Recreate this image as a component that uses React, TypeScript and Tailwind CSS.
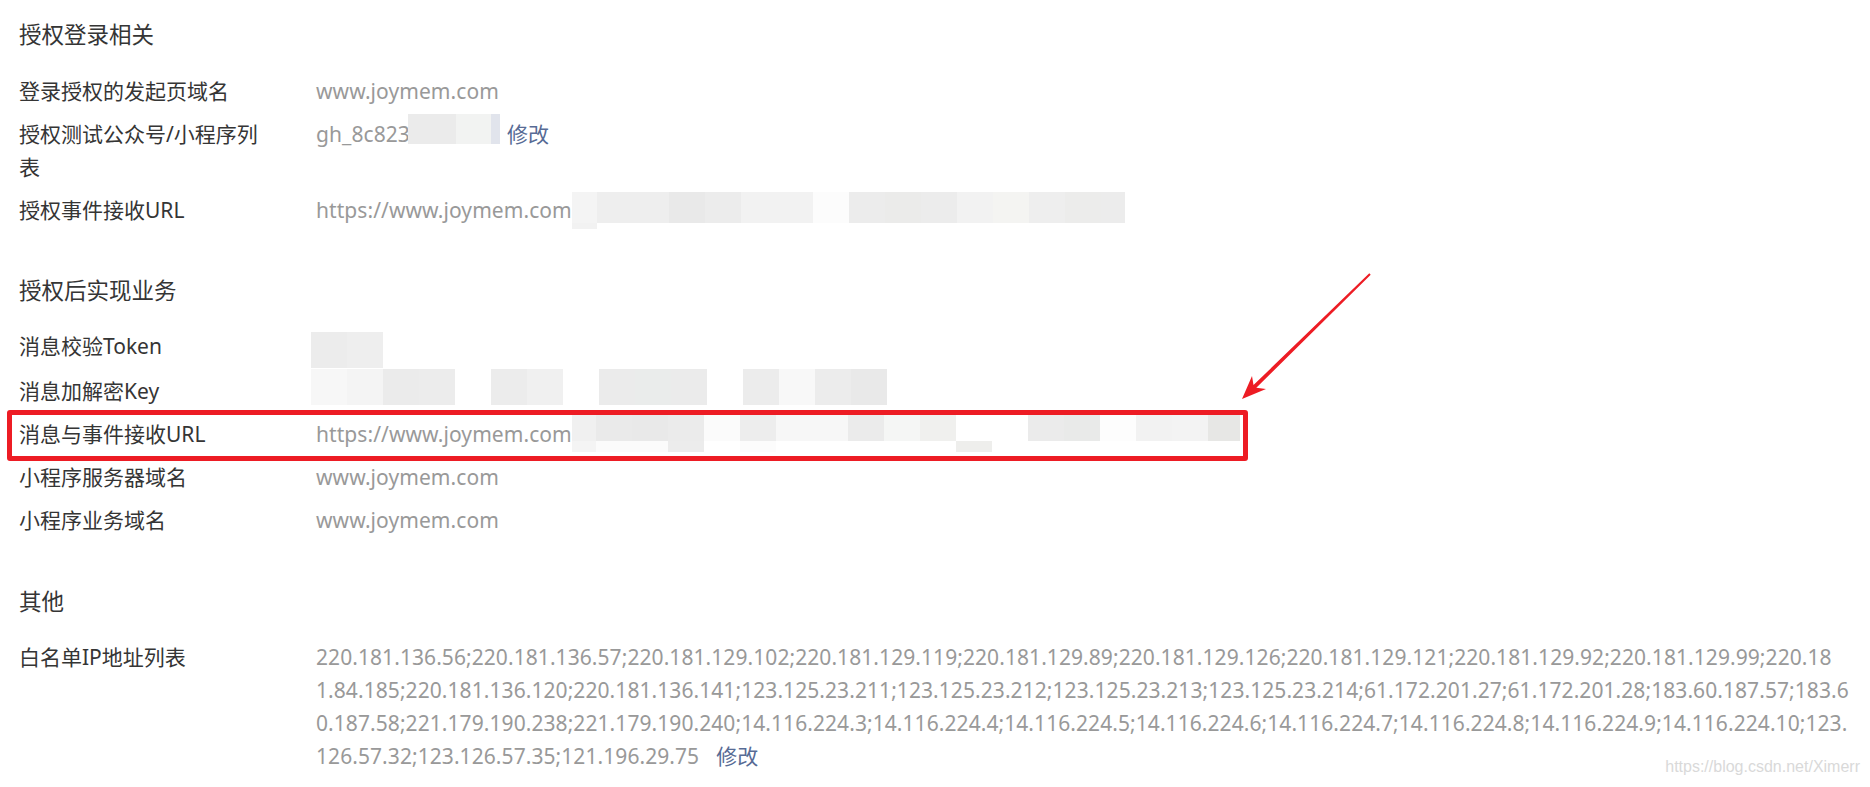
import type { ReactNode } from "react";
import clsx from "clsx";

const FONT = "font-['Noto_Sans','Noto_Sans_CJK_SC',sans-serif]";

// redaction blocks, one class string per cell
const GH_CELLS = ["w-[48px] bg-[#ebebeb]", "w-[35px] bg-[#f2f3f2]", "w-[9px] bg-[#e1e4ec]"];

const AUTH_URL_TOP = [
  "w-[25px] bg-[#f4f4f4]",
  "w-[36px] bg-[#eeeeee]",
  "w-[36px] bg-[#eeeeee]",
  "w-[36px] bg-[#e9e9e9]",
  "w-[36px] bg-[#ececec]",
  "w-[36px] bg-[#f2f2f2]",
  "w-[36px] bg-[#f2f2f2]",
  "w-[36px] bg-[#fcfcfc]",
  "w-[36px] bg-[#ececec]",
  "w-[36px] bg-[#ebebea]",
  "w-[36px] bg-[#ececec]",
  "w-[36px] bg-[#f2f2f2]",
  "w-[36px] bg-[#f4f4f2]",
  "w-[36px] bg-[#eeeeee]",
  "w-[36px] bg-[#ececeb]",
  "w-[24px] bg-[#ececec]",
];
const AUTH_URL_BOTTOM = ["w-[25px] bg-[#f2f2f2]"];

const TOKEN_CELLS = ["w-[36px] bg-[#ececec]", "w-[36px] bg-[#eeeeee]"];

const KEY_CELLS = [
  "w-[36px] bg-[#f7f7f7]",
  "w-[36px] bg-[#f4f4f4]",
  "w-[36px] bg-[#ebebeb]",
  "w-[36px] bg-[#ececec]",
  "w-[36px] bg-white",
  "w-[36px] bg-[#ececec]",
  "w-[36px] bg-[#f0f0f0]",
  "w-[36px] bg-white",
  "w-[36px] bg-[#ebebeb]",
  "w-[36px] bg-[#eaeceb]",
  "w-[36px] bg-[#ebebeb]",
  "w-[36px] bg-white",
  "w-[36px] bg-[#ececec]",
  "w-[36px] bg-[#f8f8f8]",
  "w-[36px] bg-[#ececec]",
  "w-[36px] bg-[#e9e9e9]",
];

const MSG_URL_TOP = [
  "w-[24px] bg-[#f0f0f0]",
  "w-[36px] bg-[#eaeaea]",
  "w-[36px] bg-[#e9e9e9]",
  "w-[36px] bg-[#ebebeb]",
  "w-[36px] bg-[#fbfbfb]",
  "w-[36px] bg-[#ededed]",
  "w-[36px] bg-[#f7f7f7]",
  "w-[36px] bg-[#f7f7f7]",
  "w-[36px] bg-[#ebebeb]",
  "w-[36px] bg-[#f5f6f5]",
  "w-[36px] bg-[#f0f0ee]",
  "w-[36px] bg-white",
  "w-[36px] bg-white",
  "w-[36px] bg-[#ebebeb]",
  "w-[36px] bg-[#e9eae9]",
  "w-[36px] bg-[#fdfdfd]",
  "w-[36px] bg-[#f2f2f2]",
  "w-[36px] bg-[#f3f3f3]",
  "w-[32px] bg-[#e7e7e5]",
];
const MSG_URL_BOTTOM = [
  "w-[24px] bg-[#f4f4f4]",
  "w-[36px] bg-[#fbfbfb]",
  "w-[36px] bg-[#fbfbfb]",
  "w-[36px] bg-[#ececec]",
  "w-[36px] bg-white",
  "w-[36px] bg-[#fcfcfc]",
  "w-[180px] bg-white",
  "w-[36px] bg-[#eeeeec]",
];

const WHITELIST = [
  "220.181.136.56;220.181.136.57;220.181.129.102;220.181.129.119;220.181.129.89;220.181.129.126;220.181.129.121;220.181.129.92;220.181.129.99;220.18",
  "1.84.185;220.181.136.120;220.181.136.141;123.125.23.211;123.125.23.212;123.125.23.213;123.125.23.214;61.172.201.27;61.172.201.28;183.60.187.57;183.6",
  "0.187.58;221.179.190.238;221.179.190.240;14.116.224.3;14.116.224.4;14.116.224.5;14.116.224.6;14.116.224.7;14.116.224.8;14.116.224.9;14.116.224.10;123.",
  "126.57.32;123.126.57.35;121.196.29.75",
];

function Blocks({ cells, className }: { cells: string[]; className: string }) {
  return (
    <div className={clsx("flex", className)}>
      {cells.map((c, i) => (
        <div key={i} className={clsx("shrink-0", c)} />
      ))}
    </div>
  );
}

function Heading({ children }: { children: ReactNode }) {
  return (
    <h2 className="mb-[23.5px] text-[22.5px] font-normal leading-[33px] text-[#353535]">
      {children}
    </h2>
  );
}

function Row({ label, children }: { label: string; children?: ReactNode }) {
  return (
    <div className="relative flex">
      <div className="w-[297px] shrink-0 pr-[50px] text-[#353535]">{label}</div>
      <div className="min-w-0 flex-1 tracking-[0.07px] text-[#999999]">{children}</div>
    </div>
  );
}

function EditLink({ className }: { className?: string }) {
  return <span className={clsx("cursor-pointer text-[#576b95]", className)}>修改</span>;
}

function RedArrow() {
  return (
    <svg
      className="pointer-events-none absolute left-[1217px] top-[-150px]"
      width="140"
      height="140"
      viewBox="0 0 140 140"
    >
      <polygon
        points="133.3,5.3 17.5,117 16,108 6,131 30,121 20.3,119.8 134.7,6.7"
        fill="#ed1c24"
      />
    </svg>
  );
}

export default function App() {
  return (
    <div
      className={clsx(
        "relative h-[787px] w-full overflow-hidden bg-white pl-[19px] pt-[18px] text-[21px] leading-[33px]",
        FONT,
      )}
    >
      <section>
        <Heading>授权登录相关</Heading>
        <div className="flex flex-col gap-[10px]">
          <Row label="登录授权的发起页域名">www.joymem.com</Row>
          <Row label="授权测试公众号/小程序列表">
            <div className="flex h-[33px] items-start">
              <span>gh_8c823</span>
              <Blocks cells={GH_CELLS} className="-ml-[2px] -mt-[3.5px] h-[30px]" />
              <EditLink className="ml-[7px]" />
            </div>
          </Row>
          <Row label="授权事件接收URL">
            <div className="flex h-[33px] items-start">
              <span>https://www.joymem.com</span>
              <div className="-mt-[2px] flex flex-col">
                <Blocks cells={AUTH_URL_TOP} className="h-[31px]" />
                <Blocks cells={AUTH_URL_BOTTOM} className="h-[6px]" />
              </div>
            </div>
          </Row>
        </div>
      </section>

      <section className="mt-[47px]">
        <Heading>授权后实现业务</Heading>
        <div className="flex flex-col gap-[10px]">
          <Row label="消息校验Token">
            <div className="h-[33px]">
              <Blocks cells={TOKEN_CELLS} className="-ml-[5px] mt-[1.5px] h-[36px]" />
            </div>
          </Row>
          <Row label="消息加解密Key">
            <div className="h-[33px]">
              <Blocks cells={KEY_CELLS} className="-ml-[5px] -mt-[6px] h-[36px]" />
            </div>
          </Row>
          <Row label="消息与事件接收URL">
            <div className="flex h-[33px] items-start">
              <span>https://www.joymem.com</span>
              <div className="-mt-[4px] flex flex-col">
                <Blocks cells={MSG_URL_TOP} className="h-[27px]" />
                <Blocks cells={MSG_URL_BOTTOM} className="h-[11px]" />
              </div>
            </div>
            <div className="pointer-events-none absolute -left-[12px] -top-[8px] h-[51px] w-[1241px] rounded-[3px] border-[5px] border-[#ed1c24]" />
            <RedArrow />
          </Row>
          <Row label="小程序服务器域名">www.joymem.com</Row>
          <Row label="小程序业务域名">www.joymem.com</Row>
        </div>
      </section>

      <section className="mt-[48px]">
        <Heading>其他</Heading>
        <Row label="白名单IP地址列表">
          {WHITELIST.map((line, i) => (
            <div key={i} className="whitespace-nowrap">
              {line}
              {i === WHITELIST.length - 1 && <EditLink className="ml-[17px]" />}
            </div>
          ))}
        </Row>
      </section>

      <div className="pointer-events-none absolute bottom-[10px] right-[10px] font-['Liberation_Sans',Arial,sans-serif] text-[16px] leading-[20px] text-[#d9d9d9]">
        https://blog.csdn.net/Ximerr
      </div>
    </div>
  );
}
